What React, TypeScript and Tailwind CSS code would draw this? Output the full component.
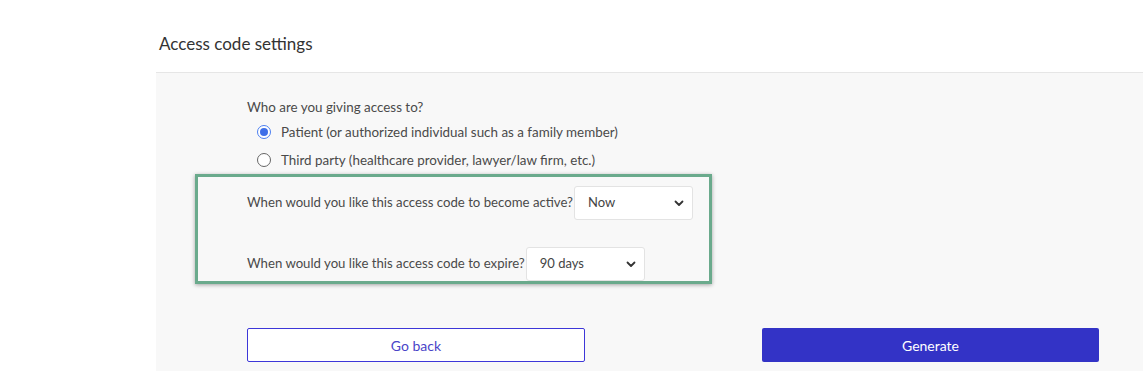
import React from "react";

function Chevron() {
  return (
    <svg width="12" height="12" viewBox="0 0 12 12" className="ml-auto">
      <path d="M2.5 4.5 L6 8 L9.5 4.5" fill="none" stroke="#333" strokeWidth="1.8" strokeLinecap="round" strokeLinejoin="round" />
    </svg>
  );
}

function Select({ value, width }: { value: string; width: string }) {
  return (
    <div className={`flex items-center h-[34px] ${width} bg-white border border-[#e3e3e3] rounded-[3px] pl-[13px] pr-[7px] text-[13px] text-[#444]`}>
      <span>{value}</span>
      <Chevron />
    </div>
  );
}

export default function App() {
  return (
    <div className="w-[1143px] h-[389px] bg-white relative" style={{ fontFamily: "Lato, 'Open Sans', sans-serif" }}>
      <div className="pl-[159px] pt-[33px] h-[72px] text-[17px] text-[#333] leading-[22px]">Access code settings</div>
      <div className="ml-[156px] h-[299px] bg-[#f8f8f8] border-t border-[#e6e6e6] pl-[91px] pt-[24px] text-[13.4px] text-[#4a4a4a]">
        <div className="leading-[20px]">Who are you giving access to?</div>
        <div className="flex items-center mt-[2px] h-[26px] pl-[10px]">
          <span className="w-[14px] h-[14px] rounded-full border-[1.5px] border-[#4c7ff0] flex items-center justify-center bg-white">
            <span className="w-[8px] h-[8px] rounded-full bg-[#3f6fe8]" />
          </span>
          <span className="ml-[10px]">Patient (or authorized individual such as a family member)</span>
        </div>
        <div className="flex items-center mt-[2px] h-[26px] pl-[10px]">
          <span className="w-[14px] h-[14px] rounded-full border-[1.5px] border-[#666] bg-white" />
          <span className="ml-[10px]">Third party (healthcare provider, lawyer/law firm, etc.)</span>
        </div>
        <div className="flex items-center mt-[13px] h-[34px] text-[13.2px]">
          <span className="mr-[1px]">When would you like this access code to become active?</span>
          <Select value="Now" width="w-[119px]" />
        </div>
        <div className="flex items-center mt-[27px] h-[34px] text-[13.2px]">
          <span className="mr-[1px]">When would you like this access code to expire?</span>
          <Select value="90 days" width="w-[119px]" />
        </div>
        <div className="flex mt-[47px] h-[34px]">
          <button className="w-[338px] h-[34px] border border-[#3d37d8] rounded-[2px] bg-white text-[#4a45c8] text-[14px]">Go back</button>
          <button className="ml-[177px] w-[337px] h-[34px] rounded-[2px] bg-[#3333c6] text-white text-[14px]">Generate</button>
        </div>
      </div>
      <div className="absolute left-[195px] top-[174px] w-[517px] h-[110px] border-[3px] border-[#6aaa8c] shadow-[0_1px_4px_rgba(0,0,0,0.35)]" />
    </div>
  );
}
